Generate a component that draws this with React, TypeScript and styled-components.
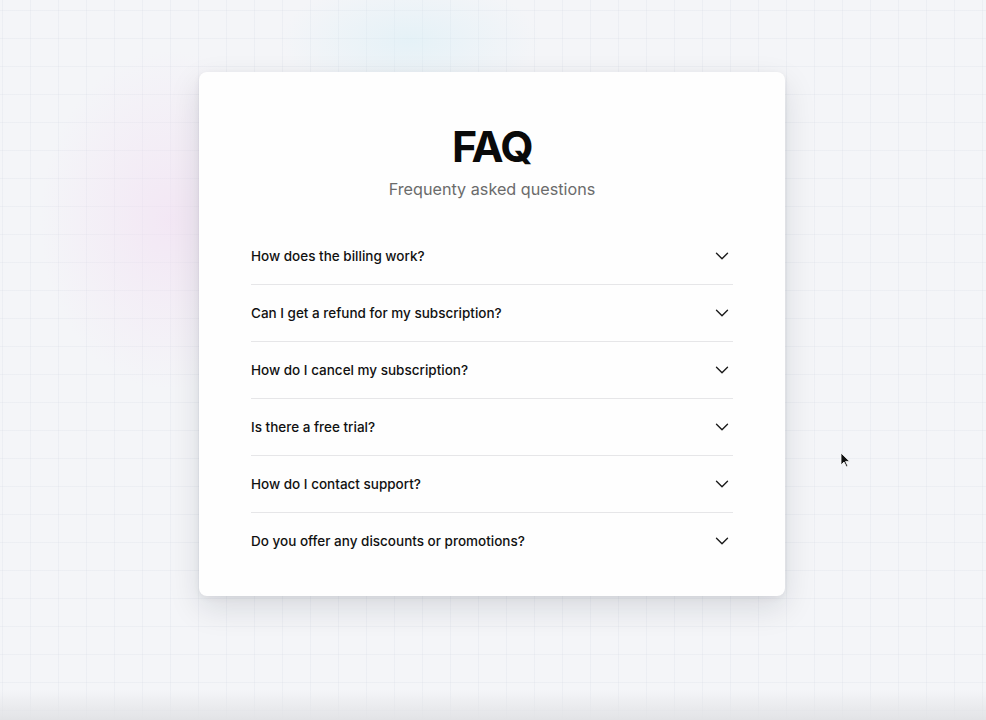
import styled, { createGlobalStyle } from "styled-components";
import { ChevronDown } from "lucide-react";

const questions = [
  "How does the billing work?",
  "Can I get a refund for my subscription?",
  "How do I cancel my subscription?",
  "Is there a free trial?",
  "How do I contact support?",
  "Do you offer any discounts or promotions?",
];

const GlobalStyle = createGlobalStyle`
  html, body {
    margin: 0;
    padding: 0;
  }
  body {
    font-family: Inter, "Noto Sans", "Liberation Sans", sans-serif;
    -webkit-font-smoothing: antialiased;
  }
`;

const Page = styled.div`
  position: relative;
  min-height: 720px;
  box-sizing: border-box;
  padding: 72px 2px 0 0;
  display: flex;
  justify-content: center;
  align-items: flex-start;
  overflow: hidden;
  background-color: #f4f5f8;
  background-image:
    linear-gradient(to bottom, rgba(0, 0, 0, 0) 690px, rgba(226, 227, 230, 1) 720px),
    radial-gradient(ellipse 130px 170px at 170px 220px, rgba(242, 222, 242, 0.6), rgba(242, 222, 242, 0)),
    radial-gradient(ellipse 130px 60px at 410px 40px, rgba(214, 238, 246, 0.5), rgba(214, 238, 246, 0)),
    linear-gradient(to right, rgba(214, 218, 228, 0.26) 1px, transparent 1px),
    linear-gradient(to bottom, rgba(214, 218, 228, 0.26) 1px, transparent 1px);
  background-size: 100% 100%, 100% 100%, 100% 100%, 28px 28px, 28px 28px;
  background-position: 0 0, 0 0, 0 0, 2px 0, 0 10px;
`;

const Card = styled.section`
  width: 586px;
  box-sizing: border-box;
  padding: 52px 52px 26px;
  background: #fefefe;
  border-radius: 8px;
  box-shadow: 0 12px 32px rgba(20, 24, 40, 0.12), 0 2px 6px rgba(20, 24, 40, 0.06);
`;

const Title = styled.h1`
  margin: 0;
  text-align: center;
  font-size: 43px;
  line-height: 44px;
  font-weight: 700;
  letter-spacing: -1.6px;
  color: #0a0a0a;
`;

const Subtitle = styled.p`
  margin: 10px 0 28px;
  text-align: center;
  font-size: 16.2px;
  line-height: 22px;
  font-weight: 400;
  color: #6b6b6b;
`;

const List = styled.div`
  display: flex;
  flex-direction: column;
`;

const Row = styled.div<{ $last?: boolean }>`
  height: 56px;
  display: flex;
  align-items: center;
  justify-content: space-between;
  border-bottom: 1px solid ${(p) => (p.$last ? "transparent" : "#e6e6e8")};
  cursor: pointer;
`;

const Question = styled.span`
  font-size: 13.5px;
  font-weight: 500;
  color: #111111;
`;

const Chevron = styled(ChevronDown)`
  color: #1a1a1a;
  flex-shrink: 0;
`;

const Cursor = styled.svg`
  position: absolute;
  left: 840px;
  top: 452px;
`;

export default function App() {
  return (
    <>
      <GlobalStyle />
      <Page>
        <Card>
          <Title>FAQ</Title>
          <Subtitle>Frequenty asked questions</Subtitle>
          <List>
            {questions.map((q, i) => (
              <Row key={q} $last={i === questions.length - 1}>
                <Question>{q}</Question>
                <Chevron size={22} strokeWidth={1.5} />
              </Row>
            ))}
          </List>
        </Card>
        <Cursor width="11" height="16" viewBox="0 0 11 16">
          <path d="M1 1 L1 13 L4 10 L6.5 15 L8 14.3 L5.6 9.4 L9.6 9.4 Z" fill="#111" stroke="#fff" strokeWidth="0.8" />
        </Cursor>
      </Page>
    </>
  );
}
